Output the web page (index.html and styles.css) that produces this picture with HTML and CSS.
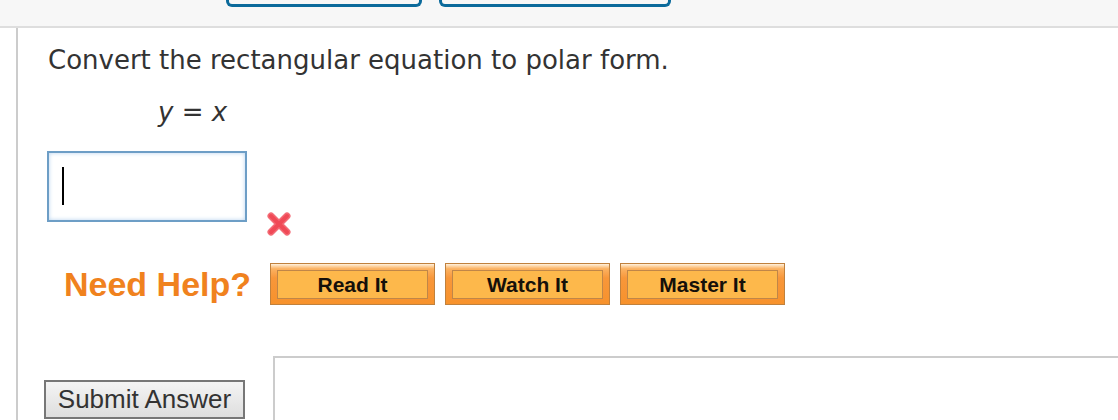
FILE: index.html
```html
<!DOCTYPE html>
<html>
<head>
<meta charset="utf-8">
<link rel="stylesheet" href="styles.css">
</head>
<body>
<div class="topbar">
  <div class="tab tab1"></div>
  <div class="tab tab2"></div>
</div>
<div class="main">
  <p class="question">Convert the rectangular equation to polar form.</p>
  <p class="equation"><i>y</i> = <i>x</i></p>
  <div class="answer-row">
    <div class="answer-box"><span class="caret"></span></div>
    <svg class="wrong" width="28" height="28" viewBox="0 0 28 28">
      <defs>
        <filter id="blur" x="-20%" y="-20%" width="140%" height="140%"><feGaussianBlur stdDeviation="0.7"/></filter>
      </defs>
      <g filter="url(#blur)" stroke-linecap="round">
        <path d="M6 6 L22 22 M22 6 L6 22" stroke="#f36a74" stroke-width="7"/>
        <path d="M6 6 L22 22 M22 6 L6 22" stroke="#f04a56" stroke-width="4"/>
      </g>
    </svg>
  </div>
  <div class="help-row">
    <span class="need-help">Need Help?</span>
    <div class="help-btn"><span>Read It</span></div>
    <div class="help-btn"><span>Watch It</span></div>
    <div class="help-btn"><span>Master It</span></div>
  </div>
  <div class="submit-row">
    <div class="submit">Submit Answer</div>
    <div class="feedback"></div>
  </div>
</div>
</body>
</html>
```
FILE: styles.css
```css
html, body {
  margin: 0;
  padding: 0;
  background: #fff;
  overflow: hidden;
}
body {
  width: 1118px;
  height: 420px;
  font-family: "DejaVu Sans", Verdana, sans-serif;
}
.topbar {
  height: 26px;
  background: #f7f7f7;
  border-bottom: 2px solid #dedede;
  display: flex;
  align-items: flex-start;
  padding-left: 226px;
  gap: 17px;
}
.tab {
  height: 4px;
  border: 3px solid #0b6a9b;
  border-top: none;
  border-radius: 0 0 6px 6px;
}
.tab1 { width: 190px; }
.tab2 { width: 226px; }
.main {
  margin-left: 16px;
  border-left: 2px solid #cccccc;
  padding-left: 30px;
  padding-top: 17px;
  height: 375px;
}
.question {
  margin: 0;
  font-size: 26px;
  line-height: 30px;
  color: #333;
}
.equation {
  margin: 22px 0 0 0;
  padding-left: 110px;
  font-size: 26px;
  line-height: 30px;
  color: #333;
}
.answer-row {
  margin-top: 24px;
  display: flex;
  align-items: flex-start;
  margin-left: -1px;
}
.answer-box {
  width: 196px;
  height: 67px;
  border: 2px solid #6d9ec6;
  box-shadow: inset 0 0 4px #b6d3ef;
  position: relative;
}
.caret {
  position: absolute;
  left: 13px;
  top: 14px;
  width: 2px;
  height: 38px;
  background: #000;
}
.wrong {
  margin-left: 18px;
  margin-top: 59px;
}
.help-row {
  margin-top: 25px;
  display: flex;
  align-items: center;
  margin-left: 16px;
}
.need-help {
  font-family: "Liberation Sans", Arial, sans-serif;
  font-weight: bold;
  font-size: 34px;
  color: #f0821e;
  width: 206px;
}
.help-btn {
  width: 165px;
  height: 42px;
  box-sizing: border-box;
  margin-right: 10px;
  border: 1px solid #c0813d;
  background: linear-gradient(#fff1dc 0%, #fbb262 12%, #f8973a 35%, #f7922c 100%);
  padding: 6px 6px 5px 6px;
}
.help-btn span {
  display: block;
  height: 100%;
  box-sizing: border-box;
  border: 1px solid #c08648;
  background: #fdb84b;
  font-family: "Liberation Sans", Arial, sans-serif;
  font-weight: bold;
  font-size: 21px;
  line-height: 27px;
  color: #15100a;
  text-align: center;
}
.submit-row {
  display: flex;
  align-items: flex-start;
  margin-top: 51px;
  margin-left: -4px;
}
.submit {
  margin-top: 24px;
  width: 197px;
  height: 35px;
  border: 2px solid #777;
  background: linear-gradient(#f4f4f4, #dedede);
  font-family: "Liberation Sans", Arial, sans-serif;
  font-size: 26px;
  line-height: 35px;
  color: #333;
  text-align: center;
}
.feedback {
  margin-left: 28px;
  flex: 1;
  height: 80px;
  border-top: 2px solid #cccccc;
  border-left: 2px solid #cccccc;
}
```
